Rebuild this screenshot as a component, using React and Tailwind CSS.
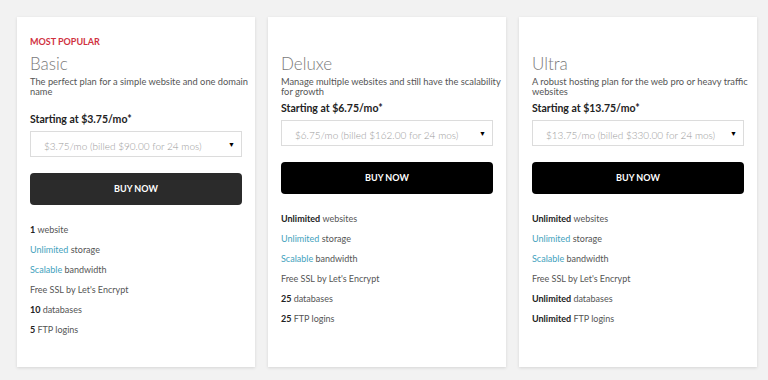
import { useState } from "react";

const plans = [
  {
    name: "Basic",
    popular: true,
    description: "The perfect plan for a simple website and one domain name",
    starting: "$3.75/mo*",
    option: "$3.75/mo (billed $90.00 for 24 mos)",
    button: "bg-[#2b2b2b]",
    features: [
      { bold: "1", rest: "website" },
      { link: "Unlimited", rest: "storage" },
      { link: "Scalable", rest: "bandwidth" },
      { rest: "Free SSL by Let's Encrypt" },
      { bold: "10", rest: "databases" },
      { bold: "5", rest: "FTP logins" },
    ],
  },
  {
    name: "Deluxe",
    description:
      "Manage multiple websites and still have the scalability for growth",
    starting: "$6.75/mo*",
    option: "$6.75/mo (billed $162.00 for 24 mos)",
    button: "bg-black",
    features: [
      { bold: "Unlimited", rest: "websites" },
      { link: "Unlimited", rest: "storage" },
      { link: "Scalable", rest: "bandwidth" },
      { rest: "Free SSL by Let's Encrypt" },
      { bold: "25", rest: "databases" },
      { bold: "25", rest: "FTP logins" },
    ],
  },
  {
    name: "Ultra",
    description:
      "A robust hosting plan for the web pro or heavy traffic websites",
    starting: "$13.75/mo*",
    option: "$13.75/mo (billed $330.00 for 24 mos)",
    button: "bg-black",
    features: [
      { bold: "Unlimited", rest: "websites" },
      { link: "Unlimited", rest: "storage" },
      { link: "Scalable", rest: "bandwidth" },
      { rest: "Free SSL by Let's Encrypt" },
      { bold: "Unlimited", rest: "databases" },
      { bold: "Unlimited", rest: "FTP logins" },
    ],
  },
];

function PlanCard({ plan }) {
  const [term, setTerm] = useState(plan.option);

  return (
    <div className="w-[238px] h-[350px] bg-white px-[13px] shadow-[0_1px_3px_rgba(0,0,0,0.12)]">
      <div className="h-[36px] pt-[19px] text-[9px] font-bold leading-[12px] text-[#d0323f]">
        {plan.popular ? "MOST POPULAR" : ""}
      </div>
      <h2 className="text-[17px] font-light leading-[22px] text-[#7a7a7a]">
        {plan.name}
      </h2>
      <p className="mt-[2px] -mr-[8px] text-[9.3px] leading-[10px] text-[#555]">
        {plan.description}
      </p>
      <p
        className={`${plan.popular ? "mt-[14px]" : "mt-[3px]"} text-[10.5px] font-bold leading-[16px] text-[#222]`}
      >
        Starting at {plan.starting}
      </p>
      <div className="relative mt-[4px] h-[26px] border border-[#dcdcdc] bg-white">
        <select
          value={term}
          onChange={(e) => setTerm(e.target.value)}
          className="h-full w-full appearance-none bg-transparent pl-[13px] text-[10px] font-light text-[#9a9a9a] outline-none"
        >
          <option>{plan.option}</option>
        </select>
        <span className="pointer-events-none absolute right-[6px] top-[8px] text-[7px] leading-[8px] text-black">
          ▼
        </span>
      </div>
      <button
        className={`mt-[16px] h-[32px] w-full rounded-[4px] ${plan.button} text-[9px] font-bold text-white`}
      >
        BUY NOW
      </button>
      <ul className="mt-[19px] space-y-[8px] text-[9px] leading-[12px] text-[#555]">
        {plan.features.map((f) => (
          <li key={f.rest + (f.bold || f.link || "")}>
            {f.bold && <span className="font-bold text-[#222]">{f.bold} </span>}
            {f.link && <span className="text-[#43a2bd]">{f.link} </span>}
            {f.rest}
          </li>
        ))}
      </ul>
    </div>
  );
}

export default function App() {
  return (
    <div className="min-h-[380px] w-[768px] bg-[#f2f2f2] pt-[17px] pl-[17px] font-['Lato',sans-serif]">
      <div className="flex gap-[13px]">
        {plans.map((plan) => (
          <PlanCard key={plan.name} plan={plan} />
        ))}
      </div>
    </div>
  );
}
